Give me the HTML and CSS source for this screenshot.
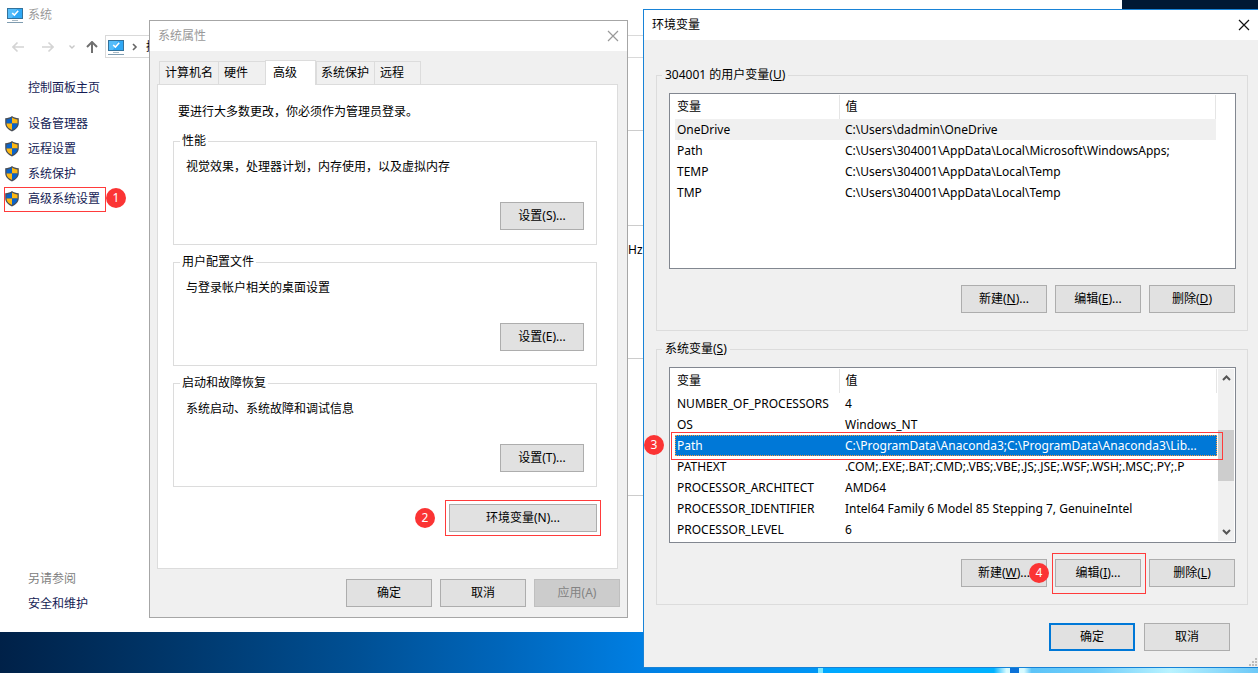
FILE: index.html
```html
<!DOCTYPE html>
<html lang="zh-CN">
<head>
<meta charset="utf-8">
<title>环境变量</title>
<link rel="stylesheet" href="styles.css">
</head>
<body>
<svg class="defs" aria-hidden="true">
  <symbol id="shield" viewBox="0 0 16 16">
    <path d="M7 0C5.300 1.500 3 2.100 0.200 2.200V7C0.200 11 3 13.800 7 15.400C11 13.800 13.800 11 13.800 7V2.200C11 2.100 8.700 1.500 7 0Z" fill="#4a4f57"/>
    <path d="M7 1.600C5.500 2.700 3.700 3.300 1.500 3.400V7.500H7Z" fill="#0a63c9"/>
    <path d="M7 1.600C8.500 2.700 10.300 3.300 12.500 3.400V7.500H7Z" fill="#fdb813"/>
    <path d="M1.500 7.500C1.700 10.600 3.700 12.700 7 14V7.500Z" fill="#fdb813"/>
    <path d="M12.500 7.500C12.300 10.600 10.300 12.700 7 14V7.500Z" fill="#0a63c9"/>
  </symbol>
  <symbol id="monitor" viewBox="0 0 16 16">
    <rect x="0.500" y="1.500" width="15" height="10" fill="#2fa8f5" stroke="#33729b"/>
    <path d="M1 2H10L5 11H1Z" fill="#55bdfa"/>
    <path d="M5.200 6L7.400 8L11.200 3.800" fill="none" stroke="#fff" stroke-width="1.600"/>
    <path d="M5 13.500H11" stroke="#a9b9c4"/>
    <path d="M0 15.500H16" stroke="#7f9cb0"/>
  </symbol>
</svg>

<main class="desktop">
  <section class="window system">
    <header class="system-title">
      <svg class="icon"><use href="#monitor"/></svg>
      <span>系统</span>
    </header>
    <nav class="toolbar">
      <button class="nav-btn" aria-label="后退"><svg width="12" height="12" viewBox="0 0 12 12"><path d="M12 6H1M5.500 1.500L1 6L5.500 10.500" stroke="#d4d4d4" stroke-width="1.600" fill="none"/></svg></button>
      <button class="nav-btn" aria-label="前进"><svg width="12" height="12" viewBox="0 0 12 12"><path d="M0 6H11M6.500 1.500L11 6L6.500 10.500" stroke="#d4d4d4" stroke-width="1.600" fill="none"/></svg></button>
      <button class="nav-btn small" aria-label="最近位置"><svg width="6" height="6" viewBox="0 0 6 6"><path d="M0.500 1.500L3 4L5.500 1.500" stroke="#c8c8c8" stroke-width="1.400" fill="none"/></svg></button>
      <button class="nav-btn" aria-label="向上"><svg width="12" height="12" viewBox="0 0 12 12"><path d="M6 12V1M1 6L6 1L11 6" stroke="#707070" stroke-width="2" fill="none"/></svg></button>
      <div class="address">
        <svg class="icon"><use href="#monitor"/></svg>
        <svg class="crumb" width="6" height="8" viewBox="0 0 6 8"><path d="M1 1L4 4L1 7" stroke="#666" stroke-width="1.600" fill="none"/></svg>
        <span>控</span>
      </div>
    </nav>
    <div class="system-body">
      <aside class="sidebar">
        <a class="side-link home" href="#">控制面板主页</a>
        <a class="side-link" href="#"><svg class="icon"><use href="#shield"/></svg>设备管理器</a>
        <a class="side-link" href="#"><svg class="icon"><use href="#shield"/></svg>远程设置</a>
        <a class="side-link" href="#"><svg class="icon"><use href="#shield"/></svg>系统保护</a>
        <a class="side-link marked" href="#"><svg class="icon"><use href="#shield"/></svg>高级系统设置<span class="frame frame-1"></span><b class="badge badge-1">1</b></a>
        <div class="see-also">
          <span>另请参阅</span>
          <a href="#">安全和维护</a>
        </div>
      </aside>
      <div class="details">
        <div class="detail d1"></div>
        <div class="detail d2"></div>
        <div class="detail d3">Hz</div>
        <div class="detail d4"></div>
      </div>
    </div>
  </section>

  <section class="window props">
    <header class="titlebar muted">
      <span>系统属性</span>
      <button class="close" aria-label="关闭"><svg width="12" height="12" viewBox="0 0 12 12"><path d="M1 1L11 11M11 1L1 11" stroke="#999" stroke-width="1.200"/></svg></button>
    </header>
    <div class="props-body">
      <div class="tabs" role="tablist">
        <button class="tab t1" role="tab">计算机名</button>
        <button class="tab t2" role="tab">硬件</button>
        <button class="tab t3 active" role="tab" aria-selected="true">高级</button>
        <button class="tab t4" role="tab">系统保护</button>
        <button class="tab t2" role="tab">远程</button>
      </div>
      <div class="panel">
        <p class="note">要进行大多数更改，你必须作为管理员登录。</p>
        <fieldset class="group">
          <legend>性能</legend>
          <p>视觉效果，处理器计划，内存使用，以及虚拟内存</p>
          <button class="btn">设置(S)...</button>
        </fieldset>
        <fieldset class="group">
          <legend>用户配置文件</legend>
          <p>与登录帐户相关的桌面设置</p>
          <button class="btn">设置(E)...</button>
        </fieldset>
        <fieldset class="group">
          <legend>启动和故障恢复</legend>
          <p>系统启动、系统故障和调试信息</p>
          <button class="btn">设置(T)...</button>
        </fieldset>
        <div class="env-row">
          <b class="badge">2</b>
          <div class="env-frame"><button class="btn">环境变量(N)...</button></div>
        </div>
      </div>
      <footer class="props-actions">
        <button class="btn">确定</button>
        <button class="btn">取消</button>
        <button class="btn" disabled>应用(A)</button>
      </footer>
    </div>
  </section>

  <section class="window env">
    <header class="titlebar">
      <span>环境变量</span>
      <button class="close" aria-label="关闭"><svg width="12" height="12" viewBox="0 0 12 12"><path d="M1 1L11 11M11 1L1 11" stroke="#111" stroke-width="1.200"/></svg></button>
    </header>
    <div class="env-body">
      <fieldset class="vars">
        <legend>304001 的用户变量(<u>U</u>)</legend>
        <div class="list">
          <table>
            <thead><tr><th class="name">变量</th><th>值</th></tr></thead>
            <tbody>
              <tr class="hover"><td>OneDrive</td><td>C:\Users\dadmin\OneDrive</td></tr>
              <tr><td>Path</td><td>C:\Users\304001\AppData\Local\Microsoft\WindowsApps;</td></tr>
              <tr><td>TEMP</td><td>C:\Users\304001\AppData\Local\Temp</td></tr>
              <tr><td>TMP</td><td>C:\Users\304001\AppData\Local\Temp</td></tr>
            </tbody>
          </table>
        </div>
        <div class="actions">
          <button class="btn">新建(<u>N</u>)...</button>
          <button class="btn">编辑(<u>E</u>)...</button>
          <button class="btn">删除(<u>D</u>)</button>
        </div>
      </fieldset>

      <fieldset class="vars">
        <legend>系统变量(<u>S</u>)</legend>
        <div class="list">
          <table>
            <thead><tr><th class="name">变量</th><th>值</th></tr></thead>
            <tbody>
              <tr><td>NUMBER_OF_PROCESSORS</td><td>4</td></tr>
              <tr><td>OS</td><td>Windows_NT</td></tr>
              <tr class="selected"><td>Path</td><td>C:\ProgramData\Anaconda3;C:\ProgramData\Anaconda3\Lib...</td></tr>
              <tr><td>PATHEXT</td><td>.COM;.EXE;.BAT;.CMD;.VBS;.VBE;.JS;.JSE;.WSF;.WSH;.MSC;.PY;.P</td></tr>
              <tr><td>PROCESSOR_ARCHITECT</td><td>AMD64</td></tr>
              <tr><td>PROCESSOR_IDENTIFIER</td><td>Intel64 Family 6 Model 85 Stepping 7, GenuineIntel</td></tr>
              <tr><td>PROCESSOR_LEVEL</td><td>6</td></tr>
            </tbody>
          </table>
          <div class="scrollbar">
            <button aria-label="向上滚动"><svg width="9" height="8" viewBox="0 0 9 8"><path d="M1 6L4.500 2.500L8 6" stroke="#555" stroke-width="2" fill="none"/></svg></button>
            <div class="track"><div class="thumb"></div></div>
            <button aria-label="向下滚动"><svg width="9" height="8" viewBox="0 0 9 8"><path d="M1 2L4.500 5.500L8 2" stroke="#555" stroke-width="2" fill="none"/></svg></button>
          </div>
          <span class="frame frame-3"></span>
          <b class="badge badge-3">3</b>
        </div>
        <div class="actions">
          <button class="btn">新建(<u>W</u>)...</button>
          <div class="marked">
            <button class="btn">编辑(<u>I</u>)...</button>
            <span class="frame frame-4"></span>
            <b class="badge badge-4">4</b>
          </div>
          <button class="btn">删除(<u>L</u>)</button>
        </div>
      </fieldset>

      <footer class="env-actions">
        <button class="btn primary">确定</button>
        <button class="btn">取消</button>
      </footer>
      <svg class="grip" width="8" height="8" viewBox="0 0 8 8"><path d="M6 0h2v2H6zM3 3h2v2H3zM6 3h2v2H6zM0 6h2v2H0zM3 6h2v2H3zM6 6h2v2H6z" fill="#bcbcbc"/></svg>
    </div>
  </section>
</main>
</body>
</html>
```
FILE: styles.css
```css
* { box-sizing: border-box; }

body {
  margin: 0;
  font: 12px/16px "Noto Sans", "Noto Sans CJK SC", sans-serif;
  color: #000;
}

button, input { font: inherit; color: inherit; }
button { padding: 0; border: 0; background: none; white-space: nowrap; }
p { margin: 0; }
a { color: inherit; text-decoration: none; }
.defs { position: absolute; width: 0; height: 0; }
.icon { width: 16px; height: 16px; flex: none; }

.desktop {
  position: relative;
  min-height: 100vh;
  overflow: hidden;
  background:
    linear-gradient(#001833, #001833) right top / 50% 60px no-repeat,
    linear-gradient(90deg, #002148 0, #00376b 14%, #004f93 28%, #0066bb 40%, #007fe3 51%, #0096f5 65%, #7be8ff 65%, #7be8ff 65.4%, #00a8ff 65.4%, #00b2ff 79%, #d8fbff 80%, #d8fbff 80.3%, #0b72d8 80.3%, #0b72d8 81%, #d8fbff 81%, #d8fbff 81.4%, #5cc4f8 82%, #6fcdfa 87%, #b9f3ff 93%, #6cc8f7 100%);
}

.window { position: absolute; }

/* Control panel window */
.system {
  top: 0;
  left: 0;
  width: 1122px;
  height: 632px;
  background: #fff;
  display: flex;
  flex-direction: column;
}
.system-title {
  display: flex;
  align-items: center;
  gap: 5px;
  padding: 6px 7px 0;
  height: 23px;
  color: #999;
}
.toolbar {
  display: flex;
  align-items: center;
  margin-top: 12px;
  padding-left: 12px;
  gap: 18px;
}
.nav-btn { display: flex; }
.nav-btn.small { margin: 0 -7px 0 -3px; }
.address {
  flex: 1;
  display: flex;
  align-items: center;
  gap: 8px;
  height: 23px;
  margin-left: -11px;
  padding-left: 2px;
  border: 1px solid #d9d9d9;
}
.crumb { flex: none; }
.system-body { flex: 1; display: flex; }
.sidebar {
  width: 149px;
  padding: 17px 0 20px 5px;
  display: flex;
  flex-direction: column;
  color: #151c55;
}
.side-link {
  display: flex;
  align-items: center;
  gap: 7px;
  height: 25px;
}
.home { padding-left: 23px; margin-bottom: 11px; }
.marked { position: relative; }
.see-also {
  display: grid;
  gap: 9px;
  margin-top: auto;
  padding-left: 23px;
}
.see-also span { color: #808080; }
.details {
  flex: 1;
  padding-left: 479px;
}
.detail { border-bottom: 1px solid #ccc; }
.d1 { height: 73px; }
.d2 { height: 95px; }
.d3 { height: 133px; padding-top: 16px; }
.d4 { height: 137px; }

/* Dialog chrome */
.titlebar {
  display: flex;
  align-items: center;
  justify-content: space-between;
  height: 30px;
  padding: 0 8px;
  background: #fff;
}
.muted { color: #999; }
.close { display: flex; }
.btn {
  width: 86px;
  height: 28px;
  border: 1px solid #adadad;
  background: #e1e1e1;
  text-align: center;
}
.btn:disabled { background: #ccc; border-color: #bfbfbf; color: #838383; }
.primary { border: 2px solid #0078d7; }

/* System properties */
.props {
  top: 20px;
  left: 149px;
  width: 479px;
  border: 1px solid #a6a6a6;
  background: #f0f0f0;
}
.props-body { padding: 9px 7px 10px; }
.tabs {
  display: flex;
  align-items: flex-end;
  padding-left: 2px;
}
.tab {
  height: 23px;
  padding: 0 5px;
  border: 1px solid #dcdcdc;
  border-right-width: 0;
  border-bottom: 0;
  text-align: left;
}
.tab:last-child { border-right-width: 1px; }
.t1 { width: 59px; }
.t2 { width: 47px; }
.t4 { width: 58px; padding: 0 4px; }
.active {
  position: relative;
  width: 51px;
  height: 25px;
  margin-bottom: -1px;
  padding-left: 7px;
  border-right-width: 1px;
  background: #fff;
}
.panel {
  height: 485px;
  margin-right: 2px;
  padding: 19px 20px 0 15px;
  border: 1px solid #dcdcdc;
  background: #fff;
}
.note { padding-left: 5px; }
.group {
  position: relative;
  height: 112px;
  margin: 13px 0 9px;
  padding: 10px 12px 14px;
  border: 1px solid #dcdcdc;
  display: flex;
  flex-direction: column;
}
.group + .group { margin-top: 0; }
.group legend { margin-left: -6px; padding: 0 2px; }
.group .btn { width: 84px; margin: auto 0 0 auto; }
.env-row {
  display: flex;
  align-items: center;
  justify-content: flex-end;
  gap: 10px;
  margin: 13px -4px 0 0;
}
.env-frame { padding: 3px; border: 1px solid #ff3b3b; }
.env-frame .btn { display: block; width: 148px; }
.props-actions {
  display: flex;
  justify-content: flex-end;
  gap: 8px;
  margin-top: 10px;
}

/* Environment variables */
.env {
  top: 9px;
  left: 643px;
  right: 0;
  border: 1px solid #1883d7;
  border-right: 0;
  background: #f0f0f0;
}
.env-body { position: relative; padding: 27px 10px 16px 12px; }
.vars {
  margin: 0 0 10px;
  padding: 10px 11px 17px 12px;
  border: 1px solid #dcdcdc;
}
.vars legend { margin-left: -7px; padding: 0 3px; }
.list {
  position: relative;
  display: flex;
  height: 176px;
  padding: 1px 1px 1px 5px;
  border: 1px solid #828790;
  background: #fff;
}
.list table {
  flex: 1;
  margin-right: 18px;
  align-self: flex-start;
  border-collapse: collapse;
  table-layout: fixed;
  width: 100%;
}
.list table:not(:last-child) { margin-right: 1px; }
th, td { text-align: left; white-space: nowrap; font-weight: normal; }
th { height: 24px; padding: 0 0 0 2px; border-right: 1px solid #e5e5e5; }
td { height: 21px; padding: 0 0 0 2px; }
th + th, td + td { padding-left: 6px; }
.name { width: 164px; }
.hover { background: #f0f0f0; }
.selected { background: #0078d7; color: #fff; outline: 1px dotted #ff9a3c; outline-offset: -1px; }
.scrollbar {
  display: flex;
  flex-direction: column;
  flex: none;
  width: 16px;
  background: #f0f0f0;
}
.scrollbar button { display: flex; align-items: center; justify-content: center; height: 18px; }
.track { flex: 1; padding-top: 43px; }
.thumb { height: 51px; background: #cdcdcd; }
.actions {
  display: flex;
  justify-content: flex-end;
  gap: 8px;
  margin-top: 16px;
  padding-right: 1px;
}
.env-actions {
  display: flex;
  justify-content: flex-end;
  gap: 9px;
  padding-top: 8px;
  padding-right: 18px;
}
.grip { position: absolute; right: 1px; bottom: 1px; }

/* Step markers */
.badge {
  display: block;
  width: 20px;
  height: 20px;
  border-radius: 50%;
  background: #fb3434;
  color: #fff;
  font-weight: normal;
  line-height: 20px;
  text-align: center;
}
.frame { position: absolute; border: 1px solid #ff3b3b; pointer-events: none; }
.frame-1 { inset: 1px 43px -1px -1px; }
.badge-1 { position: absolute; left: 101px; top: 2px; }
.frame-3 { inset: 64px 12px 82px 1px; }
.badge-3 { position: absolute; left: -26px; top: 67px; }
.frame-4 { inset: -6px -5px -7px -3px; }
.badge-4 { position: absolute; left: -26px; top: 4px; }
```
